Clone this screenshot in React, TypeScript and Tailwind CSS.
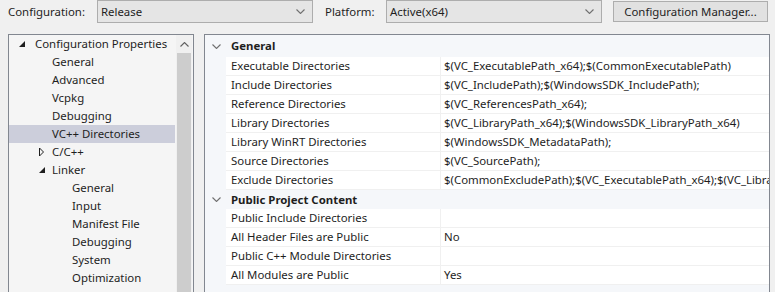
import type { ReactNode } from 'react'

const font = "font-['Segoe_UI','Noto_Sans',sans-serif]"

type Row = { name: string; value: string }

const general: Row[] = [
  { name: 'Executable Directories', value: '$(VC_ExecutablePath_x64);$(CommonExecutablePath)' },
  { name: 'Include Directories', value: '$(VC_IncludePath);$(WindowsSDK_IncludePath);' },
  { name: 'Reference Directories', value: '$(VC_ReferencesPath_x64);' },
  { name: 'Library Directories', value: '$(VC_LibraryPath_x64);$(WindowsSDK_LibraryPath_x64)' },
  { name: 'Library WinRT Directories', value: '$(WindowsSDK_MetadataPath);' },
  { name: 'Source Directories', value: '$(VC_SourcePath);' },
  { name: 'Exclude Directories', value: '$(CommonExcludePath);$(VC_ExecutablePath_x64);$(VC_LibraryPath_x64)' },
]

const publicContent: Row[] = [
  { name: 'Public Include Directories', value: '' },
  { name: 'All Header Files are Public', value: 'No' },
  { name: 'Public C++ Module Directories', value: '' },
  { name: 'All Modules are Public', value: 'Yes' },
]

type Node = { label: string; level: number; expander?: 'open' | 'closed'; selected?: boolean }

const tree: Node[] = [
  { label: 'Configuration Properties', level: 0, expander: 'open' },
  { label: 'General', level: 1 },
  { label: 'Advanced', level: 1 },
  { label: 'Vcpkg', level: 1 },
  { label: 'Debugging', level: 1 },
  { label: 'VC++ Directories', level: 1, selected: true },
  { label: 'C/C++', level: 1, expander: 'closed' },
  { label: 'Linker', level: 1, expander: 'open' },
  { label: 'General', level: 2 },
  { label: 'Input', level: 2 },
  { label: 'Manifest File', level: 2 },
  { label: 'Debugging', level: 2 },
  { label: 'System', level: 2 },
  { label: 'Optimization', level: 2 },
]

function Chevron({ up = false, color = '#606060' }: { up?: boolean; color?: string }) {
  return (
    <svg width="9" height="5" viewBox="0 0 9 5" className="block">
      <path d={up ? 'M0.5 4.5 L4.5 0.5 L8.5 4.5' : 'M0.5 0.5 L4.5 4.5 L8.5 0.5'} fill="none" stroke={color} strokeWidth="1.1" />
    </svg>
  )
}

function Combo({ value }: { value: string }) {
  return (
    <div className="w-[216px] h-[23px] border border-[#adadad] bg-[#e5e5e5] flex items-center pl-[3px] pr-[7px]">
      <span className="flex-1">{value}</span>
      <Chevron color="#707070" />
    </div>
  )
}

function Expander({ kind }: { kind: 'open' | 'closed' }) {
  if (kind === 'open') {
    return (
      <svg width="6" height="6" viewBox="0 0 6 6" className="block">
        <polygon points="6,0 6,6 0,6" fill="#1e1e1e" />
      </svg>
    )
  }
  return (
    <svg width="6" height="9" viewBox="0 0 6 9" className="block">
      <polygon points="0.5,0.5 4.5,4.5 0.5,8.5" fill="none" stroke="#1e1e1e" strokeWidth="1" />
    </svg>
  )
}

function TreeRow({ node }: { node: Node }) {
  const textPad = node.level === 0 ? 'pl-[26px]' : node.level === 1 ? 'pl-[43px]' : 'pl-[63px]'
  const expPos = node.level === 0 ? 'left-[10px]' : 'left-[30px]'
  return (
    <div className={`relative h-[18px] flex items-center ${textPad} ${node.selected ? 'bg-[#cccedb]' : ''}`}>
      {node.expander && (
        <span className={`absolute ${expPos} top-1/2 -translate-y-1/2`}>
          <Expander kind={node.expander} />
        </span>
      )}
      <span className="whitespace-nowrap">{node.label}</span>
    </div>
  )
}

function Header({ title, tall = false }: { title: string; tall?: boolean }) {
  return (
    <div className={`${tall ? 'h-[22px]' : 'h-[19px]'} flex items-center bg-[#f5f7fa]`}>
      <div className="w-[21px] flex justify-center pl-[1px]">
        <Chevron color="#707070" />
      </div>
      <span className="pl-[5px] font-bold">{title}</span>
    </div>
  )
}

function PropRow({ row }: { row: Row }) {
  return (
    <div className="h-[19px] flex">
      <div className="w-[21px] shrink-0 bg-[#f5f7fa]" />
      <div className="flex-1 flex bg-white border-b border-[#f0f0f0] min-w-0">
        <div className="w-[215px] shrink-0 pl-[5px] flex items-center border-r border-[#f0f0f0] whitespace-nowrap">{row.name}</div>
        <div className="flex-1 pl-[3px] flex items-center whitespace-nowrap overflow-hidden">{row.value}</div>
      </div>
    </div>
  )
}

function Section({ children }: { children: ReactNode }) {
  return <>{children}</>
}

export default function App() {
  return (
    <div className={`w-[775px] h-[292px] overflow-hidden bg-[#f0f0f0] text-[11.4px] leading-none text-[#1e1e1e] ${font}`}>
      {/* toolbar */}
      <div className="h-[34px] flex items-start pl-[8px]">
        <div className="w-[89px] h-[23px] flex items-center">Configuration:</div>
        <Combo value="Release" />
        <div className="ml-[12px] w-[61px] h-[23px] flex items-center">Platform:</div>
        <Combo value="Active(x64)" />
        <div className="ml-[11px] mt-[1px] w-[155px] h-[21px] border border-[#adadad] bg-[#e1e1e1] flex items-center justify-center">
          Configuration Manager...
        </div>
      </div>

      <div className="flex pl-[8px] gap-[10px]">
        {/* tree */}
        <div className="w-[186px] h-[270px] border border-[#828790] bg-[#f5f5f5] flex">
          <div className="flex-1 pr-[1px]">
            {tree.map((n, i) => (
              <TreeRow key={i} node={n} />
            ))}
          </div>
          <div className="w-[16px] bg-[#f0f0f0] flex flex-col mr-[1px]">
            <div className="h-[18px] flex items-center justify-center">
              <Chevron up color="#606060" />
            </div>
            <div className="flex-1 bg-[#cdcdcd] mx-[1px]" />
          </div>
        </div>

        {/* property grid */}
        <div className="w-[566px] h-[270px] border border-[#828790] bg-[#f5f7fa] overflow-hidden">
          <Section>
            <Header title="General" tall />
            {general.map((r) => (
              <PropRow key={r.name} row={r} />
            ))}
          </Section>
          <Section>
            <Header title="Public Project Content" />
            {publicContent.map((r) => (
              <PropRow key={r.name} row={r} />
            ))}
          </Section>
        </div>
      </div>
    </div>
  )
}
